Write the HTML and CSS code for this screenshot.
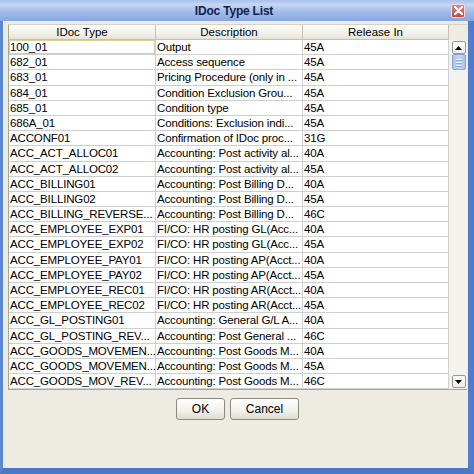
FILE: index.html
```html
<!DOCTYPE html>
<html>
<head>
<meta charset="utf-8">
<title>IDoc Type List</title>
<link rel="stylesheet" href="styles.css">
</head>
<body>
<div class="window">
  <div class="titlebar">
    <span></span>
    <span class="title">IDoc Type List</span>
    <span class="close-wrap">
      <span class="close">
        <svg width="9" height="9" viewBox="0 0 9 9"><path d="M1 1 L8 8 M8 1 L1 8" stroke="#fff" stroke-width="2.2" stroke-linecap="round"/></svg>
      </span>
    </span>
  </div>
  <div class="frame">
    <div class="pane">
      <div class="table">
        <div class="thead">
          <div class="th">IDoc Type</div>
          <div class="th">Description</div>
          <div class="th">Release In</div>
        </div>
        <div class="tbody">
          <div class="row"><div class="cell focus">100_01</div><div class="cell">Output</div><div class="cell">45A</div></div>
          <div class="row"><div class="cell">682_01</div><div class="cell">Access sequence</div><div class="cell">45A</div></div>
          <div class="row"><div class="cell">683_01</div><div class="cell">Pricing Procedure (only in ...</div><div class="cell">45A</div></div>
          <div class="row"><div class="cell">684_01</div><div class="cell">Condition Exclusion Grou...</div><div class="cell">45A</div></div>
          <div class="row"><div class="cell">685_01</div><div class="cell">Condition type</div><div class="cell">45A</div></div>
          <div class="row"><div class="cell">686A_01</div><div class="cell">Conditions: Exclusion indi...</div><div class="cell">45A</div></div>
          <div class="row"><div class="cell">ACCONF01</div><div class="cell">Confirmation of IDoc proc...</div><div class="cell">31G</div></div>
          <div class="row"><div class="cell">ACC_ACT_ALLOC01</div><div class="cell">Accounting: Post activity al...</div><div class="cell">40A</div></div>
          <div class="row"><div class="cell">ACC_ACT_ALLOC02</div><div class="cell">Accounting: Post activity al...</div><div class="cell">45A</div></div>
          <div class="row"><div class="cell">ACC_BILLING01</div><div class="cell">Accounting: Post Billing D...</div><div class="cell">40A</div></div>
          <div class="row"><div class="cell">ACC_BILLING02</div><div class="cell">Accounting: Post Billing D...</div><div class="cell">45A</div></div>
          <div class="row"><div class="cell">ACC_BILLING_REVERSE...</div><div class="cell">Accounting: Post Billing D...</div><div class="cell">46C</div></div>
          <div class="row"><div class="cell">ACC_EMPLOYEE_EXP01</div><div class="cell">FI/CO: HR posting GL(Acc...</div><div class="cell">40A</div></div>
          <div class="row"><div class="cell">ACC_EMPLOYEE_EXP02</div><div class="cell">FI/CO: HR posting GL(Acc...</div><div class="cell">45A</div></div>
          <div class="row"><div class="cell">ACC_EMPLOYEE_PAY01</div><div class="cell">FI/CO: HR posting AP(Acct...</div><div class="cell">40A</div></div>
          <div class="row"><div class="cell">ACC_EMPLOYEE_PAY02</div><div class="cell">FI/CO: HR posting AP(Acct...</div><div class="cell">45A</div></div>
          <div class="row"><div class="cell">ACC_EMPLOYEE_REC01</div><div class="cell">FI/CO: HR posting AR(Acct...</div><div class="cell">40A</div></div>
          <div class="row"><div class="cell">ACC_EMPLOYEE_REC02</div><div class="cell">FI/CO: HR posting AR(Acct...</div><div class="cell">45A</div></div>
          <div class="row"><div class="cell">ACC_GL_POSTING01</div><div class="cell">Accounting: General G/L A...</div><div class="cell">40A</div></div>
          <div class="row"><div class="cell">ACC_GL_POSTING_REV...</div><div class="cell">Accounting: Post General ...</div><div class="cell">46C</div></div>
          <div class="row"><div class="cell">ACC_GOODS_MOVEMEN...</div><div class="cell">Accounting: Post Goods M...</div><div class="cell">40A</div></div>
          <div class="row"><div class="cell">ACC_GOODS_MOVEMEN...</div><div class="cell">Accounting: Post Goods M...</div><div class="cell">45A</div></div>
          <div class="row"><div class="cell">ACC_GOODS_MOV_REV...</div><div class="cell">Accounting: Post Goods M...</div><div class="cell">46C</div></div>
        </div>
      </div>
      <div class="scrollcol">
        <div class="corner"></div>
        <div class="scrollbar">
          <div class="sbtn">
            <svg width="7" height="4" viewBox="0 0 7 4"><path d="M0 4 L3.5 0 L7 4 Z" fill="#000"/></svg>
          </div>
          <div class="thumb"><span></span><span></span><span></span></div>
          <div class="track"></div>
          <div class="sbtn">
            <svg width="7" height="4" viewBox="0 0 7 4"><path d="M0 0 L3.5 4 L7 0 Z" fill="#000"/></svg>
          </div>
        </div>
      </div>
    </div>
    <div class="buttons">
      <button class="btn ok">OK</button>
      <button class="btn cancel">Cancel</button>
    </div>
  </div>
</div>
</body>
</html>
```

FILE: styles.css
```css
* { box-sizing: border-box; }

html, body {
  margin: 0;
  padding: 0;
  background: #5a86d2;
}

body {
  font-family: "Liberation Sans", Arial, sans-serif;
  font-size: 11.5px;
  color: #000;
}

.window {
  width: 474px;
  height: 474px;
  display: flex;
  flex-direction: column;
  background: #5a86d2;
}

.titlebar {
  height: 21px;
  flex: none;
  display: grid;
  grid-template-columns: 1fr auto 1fr;
  align-items: center;
  background: linear-gradient(#a9c2ec 0%, #c4d6f4 22%, #a2bdea 55%, #86a7e0 100%);
  padding-right: 6px;
}

.title {
  font-weight: bold;
  font-size: 12px;
  color: #15214a;
  letter-spacing: -0.2px;
}

.close-wrap {
  display: flex;
  justify-content: flex-end;
  padding-right: 3px;
}

.close {
  width: 14px;
  height: 14px;
  border-radius: 2px;
  background: linear-gradient(#e08478, #c24a3d);
  border: 1px solid #f2d6d0;
  display: flex;
  align-items: center;
  justify-content: center;
}

.frame {
  flex: 1;
  background: #eeece2;
  border-left: 3px solid #5a86d2;
  border-right: 6px solid #4f7dcd;
  border-bottom: 6px solid #4a78c9;
  padding: 3px 1px 0 5px;
  display: flex;
  flex-direction: column;
}

.pane {
  display: flex;
  border: 1px solid #a7a595;
  border-right: none;
  border-top-color: #d6d3c6;
  background: #eeece2;
  width: 459px;
}

.table {
  width: 440px;
  background: #fff;
}

.thead {
  display: grid;
  grid-template-columns: 147px 147px 146px;
  height: 15px;
  background: linear-gradient(#fdfdfb, #efeee6 70%, #e4e2d6);
  border-bottom: 1px solid #c6c2b1;
}

.th {
  text-align: center;
  line-height: 14px;
  font-size: 11.5px;
  border-right: 1px solid #c6c2b1;
  white-space: nowrap;
  overflow: hidden;
}

.tbody {
  display: flex;
  flex-direction: column;
}

.row {
  display: grid;
  grid-template-columns: 147px 147px 146px;
  height: 15.2px;
}

.cell {
  border-right: 1px solid #cfcfcf;
  border-bottom: 1px solid #cfcfcf;
  padding: 0 1px;
  line-height: 14px;
  letter-spacing: -0.15px;
  white-space: nowrap;
  overflow: hidden;
}

.cell.focus {
  box-shadow: inset 0 0 0 1px #dcce96;
}

.scrollcol {
  width: 18px;
  display: flex;
  flex-direction: column;
}

.corner {
  height: 15px;
  background: #eeece2;
}

.scrollbar {
  flex: 1;
  display: flex;
  flex-direction: column;
  align-items: center;
  padding: 1px 0 1px 1px;
  background: #f3f2ec;
}

.sbtn {
  width: 14px;
  height: 13px;
  flex: none;
  background: linear-gradient(#ffffff, #ecebe4);
  border: 1px solid #9c9a90;
  border-radius: 2px;
  display: flex;
  align-items: center;
  justify-content: center;
}

.thumb {
  width: 14px;
  height: 16px;
  flex: none;
  background: linear-gradient(90deg, #aec3ec, #c6d5f3 50%, #aec3ec);
  border: 1px solid #8aa4d4;
  border-radius: 2px;
  display: flex;
  flex-direction: column;
  align-items: center;
  justify-content: center;
  gap: 2px;
}

.thumb span {
  width: 6px;
  height: 1px;
  background: #eef3fc;
  box-shadow: 0 1px 0 #8ea8d8;
}

.track {
  flex: 1;
}

.buttons {
  display: flex;
  justify-content: center;
  gap: 5px;
  margin-top: 8px;
}

.btn {
  height: 22px;
  font-family: "Liberation Sans", Arial, sans-serif;
  font-size: 12px;
  color: #000;
  border: 1px solid #8c8a80;
  border-radius: 3px;
  background: linear-gradient(#fefefd, #f1f0ea 60%, #dedcd1);
  padding: 0;
}

.btn.ok { width: 49px; }
.btn.cancel { width: 69px; }
```
